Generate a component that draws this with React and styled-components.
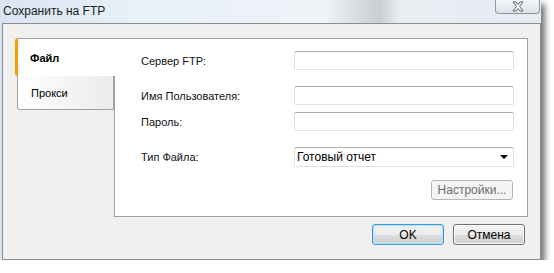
import React from 'react'
import styled, { createGlobalStyle } from 'styled-components'

const GlobalStyle = createGlobalStyle`
  html, body {
    margin: 0;
    padding: 0;
    background: #ffffff;
  }
  body {
    font-family: "Liberation Sans", Arial, sans-serif;
    font-size: 11px;
    color: #000;
  }
`

const CloseIcon = () => (
  <svg width="14" height="11" viewBox="0 0 14 11">
    <path
      d="M2 1 L5 1 L7 3.5 L9 1 L12 1 L8.6 5.5 L12 10 L9 10 L7 7.5 L5 10 L2 10 L5.4 5.5 Z"
      fill="#ffffff"
      stroke="#5a5f66"
      strokeWidth="1"
      strokeLinejoin="round"
    />
  </svg>
)

const App = () => {
  return (
    <>
      <GlobalStyle />
      <Window>
        <TitleBar>
          <Title>Сохранить на FTP</Title>
          <CloseButton>
            <CloseIcon />
          </CloseButton>
        </TitleBar>
        <Body>
          <Content>
            <Tabs>
              <Tab active>Файл</Tab>
              <Tab>Прокси</Tab>
            </Tabs>
            <Panel>
              <FormRow top={12}>
                <Label>Сервер FTP:</Label>
                <Input />
              </FormRow>
              <FormRow top={16}>
                <Label>Имя Пользователя:</Label>
                <Input />
              </FormRow>
              <FormRow top={7}>
                <Label>Пароль:</Label>
                <Input />
              </FormRow>
              <FormRow top={16}>
                <Label>Тип Файла:</Label>
                <Select>
                  <span>Готовый отчет</span>
                  <Arrow />
                </Select>
              </FormRow>
              <ButtonRow>
                <SettingsButton>Настройки...</SettingsButton>
              </ButtonRow>
            </Panel>
          </Content>
          <Footer>
            <DialogButton primary>OK</DialogButton>
            <DialogButton>Отмена</DialogButton>
          </Footer>
        </Body>
      </Window>
    </>
  )
}

export default App

const Window = styled.div`
  width: 541px;
  height: 260px;
  box-sizing: border-box;
  padding: 23px 0 0 2px;
  position: relative;
  background: linear-gradient(
    to right,
    #d9e5f1 0%,
    #e8f0f8 25%,
    #eef3f8 60%,
    #c9ced3 70%,
    #e9eef3 74%,
    #e4ebf2 100%
  );
  box-shadow: 4px 4px 6px rgba(0, 0, 0, 0.55);
`

const TitleBar = styled.div`
  position: absolute;
  top: 0;
  left: 0;
  right: 0;
  height: 23px;
  display: flex;
  align-items: flex-start;
  justify-content: space-between;
`

const Title = styled.div`
  font-family: "Liberation Sans", Arial, sans-serif;
  font-size: 12px;
  color: #1b1b1b;
  padding: 4px 0 0 3px;
`

const CloseButton = styled.div`
  width: 45px;
  height: 14px;
  margin-right: 1px;
  box-sizing: border-box;
  border: 1px solid #8f959c;
  border-top: none;
  border-radius: 0 0 4px 4px;
  background: linear-gradient(#f2f5f8, #dde3e9);
  display: flex;
  align-items: center;
  justify-content: center;
`

const Body = styled.div`
  width: 539px;
  height: 237px;
  box-sizing: border-box;
  border: 1px solid #8a8d91;
  background: #f0f0f0;
  padding: 14px 12px 0 12px;
  display: flex;
  flex-direction: column;
`

const Content = styled.div`
  display: flex;
  height: 179px;
`

const Tabs = styled.div`
  width: 100px;
  display: flex;
  flex-direction: column;
  position: relative;
  z-index: 1;
  margin-right: -1px;
`

const Tab = styled.div`
  box-sizing: border-box;
  display: flex;
  align-items: center;
  ${(p) =>
    p.active
      ? `
    height: 38px;
    background: #ffffff;
    border-top: 1px solid #a0a0a0;
    border-left: 3px solid #f5a000;
    border-radius: 3px 0 0 3px;
    padding-left: 12px;
    font-weight: bold;
  `
      : `
    height: 34px;
    margin-left: 2px;
    margin-right: 1px;
    background: linear-gradient(to right, #ffffff, #ebebeb);
    border: 1px solid #a0a0a0;
    border-top: none;
    border-radius: 0 0 0 3px;
    padding-left: 13px;
  `}
`

const Panel = styled.div`
  flex: 1;
  box-sizing: border-box;
  background: #ffffff;
  border: 1px solid #a0a0a0;
  padding: 0 13px 0 26px;
  display: flex;
  flex-direction: column;
`

const FormRow = styled.div`
  display: grid;
  grid-template-columns: 153px 1fr;
  align-items: center;
  margin-top: ${(p) => p.top}px;
`

const Label = styled.div`
  color: #111;
`

const Input = styled.div`
  height: 19px;
  box-sizing: border-box;
  border: 1px solid #dde1e8;
  border-top-color: #abadb3;
  border-radius: 2px;
  background: #ffffff;
`

const Select = styled.div`
  height: 20px;
  box-sizing: border-box;
  border: 1px solid #dde1e8;
  border-top-color: #abadb3;
  border-radius: 2px;
  background: #ffffff;
  display: flex;
  align-items: center;
  justify-content: space-between;
  padding: 0 5px 0 2px;
  font-size: 12px;
`

const Arrow = styled.span`
  width: 0;
  height: 0;
  border-left: 4px solid transparent;
  border-right: 4px solid transparent;
  border-top: 4px solid #000;
`

const ButtonRow = styled.div`
  display: flex;
  justify-content: flex-end;
  margin-top: 13px;
`

const SettingsButton = styled.div`
  width: 82px;
  height: 20px;
  margin-right: 1px;
  box-sizing: border-box;
  border: 1px solid #b5b5b5;
  border-radius: 3px;
  background: #f4f4f4;
  color: #6d6d6d;
  font-size: 12px;
  display: flex;
  align-items: center;
  justify-content: center;
`

const Footer = styled.div`
  display: flex;
  justify-content: flex-end;
  gap: 9px;
  margin-top: 7px;
  padding-right: 3px;
`

const DialogButton = styled.div`
  width: 72px;
  height: 21px;
  box-sizing: border-box;
  border: 1px solid ${(p) => (p.primary ? '#3c9ad6' : '#707070')};
  border-radius: 3px;
  background: linear-gradient(#f2f2f2 0%, #ebebeb 50%, #dddddd 51%, #cfcfcf 100%);
  box-shadow: ${(p) => (p.primary ? 'inset 0 0 0 1px #aee0fa' : 'inset 0 0 0 1px #fcfcfc')};
  font-size: 12px;
  color: #000;
  display: flex;
  align-items: center;
  justify-content: center;
`
